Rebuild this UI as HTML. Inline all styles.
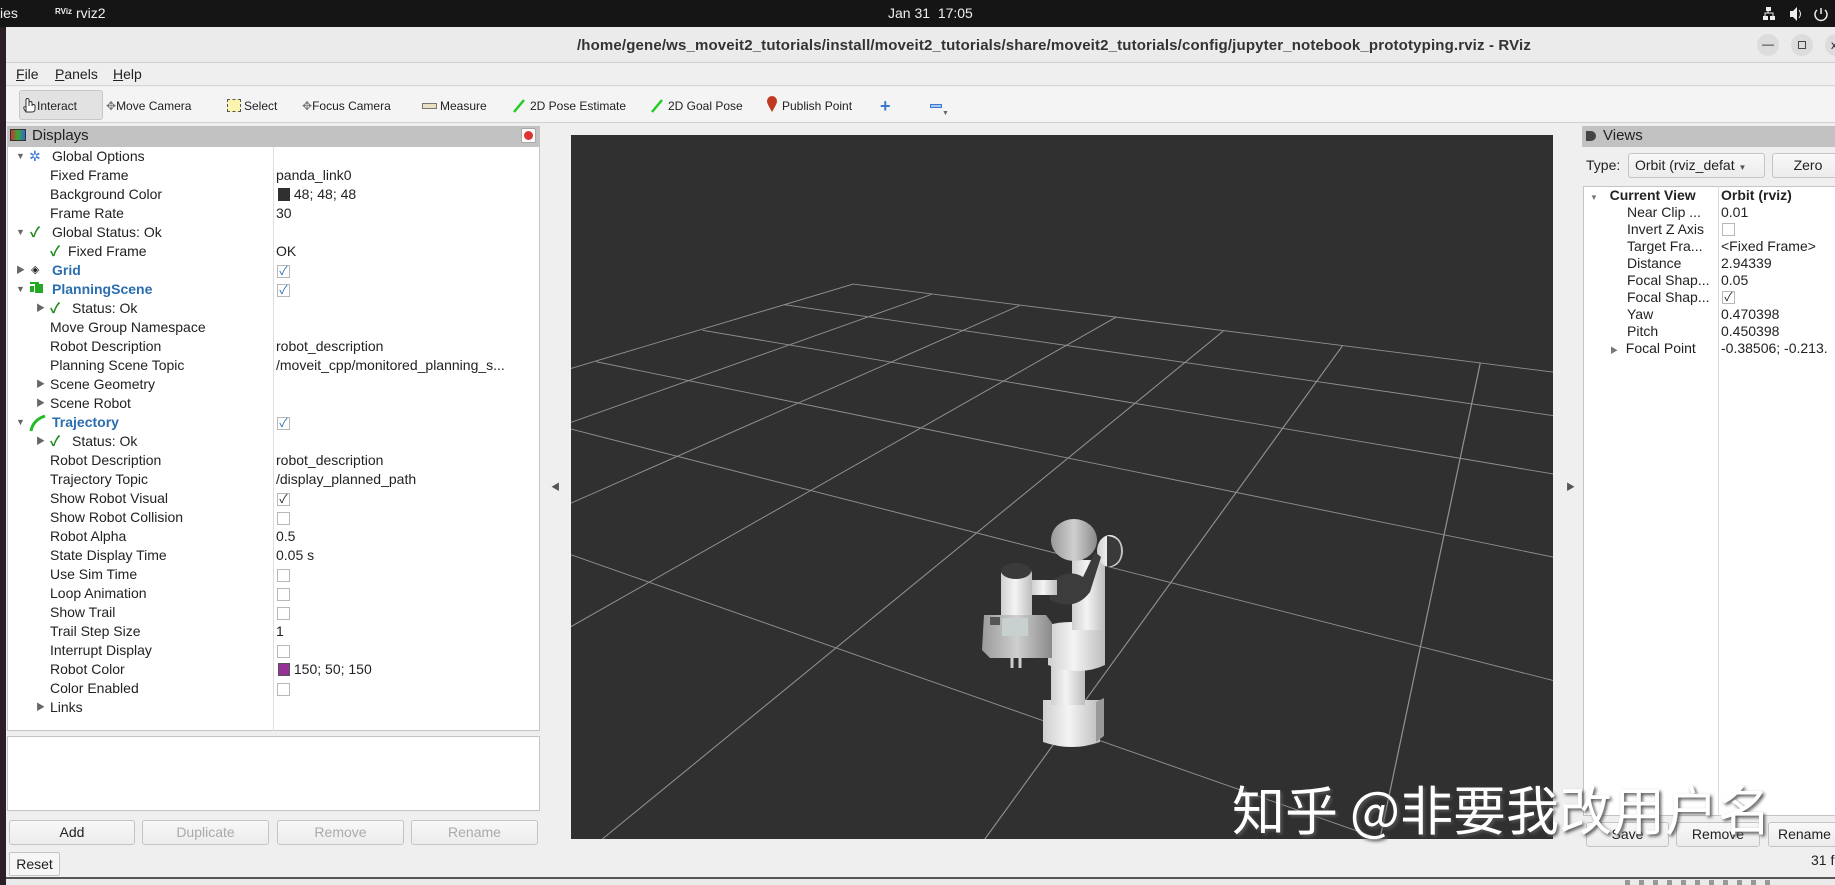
<!DOCTYPE html>
<html><head><meta charset="utf-8">
<style>
*{margin:0;padding:0;box-sizing:border-box}
body{width:1835px;height:885px;overflow:hidden;background:#efefef;font-family:"Liberation Sans","Noto Sans CJK SC",sans-serif;color:#222;position:relative}
.a{position:absolute}
.r{position:absolute;height:19px;line-height:19px;font-size:14px;white-space:nowrap}
.rr{position:absolute;height:17px;line-height:17px;font-size:14px;white-space:nowrap}
.cb{position:absolute;width:13px;height:13px;border:1px solid #b8b8b8;background:#fff;font-size:12px;line-height:11px;text-align:center;color:#222}
.blue{color:#2a6db0;font-weight:bold}
.tri{position:absolute;font-size:9px;color:#666}
.btn{position:absolute;border:1px solid #c4c4c4;border-radius:3px;background:linear-gradient(#f8f8f8,#ececec);font-size:14px;text-align:center}
.tb{position:absolute;top:98px;font-size:12px;height:16px;line-height:16px;white-space:nowrap}
.chk{color:#1a8a1a;font-weight:bold}
</style></head><body>
<div class="a" style="left:0;top:0;width:1835px;height:27px;background:#151515;color:#eee;font-size:14px">
 <span class="a" style="left:0;top:5px">ies</span>
 <span class="a" style="left:55px;top:7px;font-size:8px;font-weight:bold">RViz</span>
 <span class="a" style="left:76px;top:5px">rviz2</span>
 <span class="a" style="left:888px;top:5px">Jan 31&nbsp; 17:05</span>
 <svg class="a" style="left:1763px;top:5px" width="70" height="18"><g fill="#eee"><rect x="3" y="2" width="5" height="4"/><rect x="0" y="11" width="5" height="4"/><rect x="7" y="11" width="5" height="4"/><path d="M5 6v2M2 11V8h8v3" stroke="#eee" fill="none"/><path d="M27 6h3l4-4v14l-4-4h-3z"/><path d="M36 5q3 4 0 8" stroke="#eee" fill="none"/><path d="M58 3v6M54 5a6 6 0 1 0 8 0" stroke="#eee" stroke-width="1.5" fill="none"/></g></svg>
</div>
<div class="a" style="left:0;top:27px;width:6px;height:858px;background:#2b1e27"></div>
<div class="a" style="left:6px;top:27px;width:1829px;height:36px;background:#ebebeb;border-bottom:1px solid #cfcfcf"></div>
<div class="a" style="left:440px;top:37px;width:1228px;text-align:center;font-size:15px;font-weight:bold;color:#333;letter-spacing:0.15px">/home/gene/ws_moveit2_tutorials/install/moveit2_tutorials/share/moveit2_tutorials/config/jupyter_notebook_prototyping.rviz - RViz</div>
<div class="a" style="left:1757px;top:34px;width:22px;height:22px;border-radius:11px;background:#dcdcdc;text-align:center;font-size:12px;line-height:20px">—</div>
<div class="a" style="left:1791px;top:34px;width:22px;height:22px;border-radius:11px;background:#dcdcdc"><div class="a" style="left:7px;top:7px;width:8px;height:8px;border:1px solid #444"></div></div>
<div class="a" style="left:1825px;top:34px;width:22px;height:22px;border-radius:11px;background:#dcdcdc;font-size:12px;line-height:22px;padding-left:6px">x</div>
<div class="a" style="left:6px;top:64px;width:1829px;height:22px;background:#efefef;border-bottom:1px solid #d6d6d6"></div>
<div class="a" style="left:16px;top:66px;font-size:14px"><u>F</u>ile</div>
<div class="a" style="left:55px;top:66px;font-size:14px"><u>P</u>anels</div>
<div class="a" style="left:113px;top:66px;font-size:14px"><u>H</u>elp</div>
<div class="a" style="left:6px;top:87px;width:1829px;height:36px;background:#f4f4f4;border-bottom:1px solid #d0d0d0"></div>
<div class="a" style="left:19px;top:90px;width:84px;height:30px;background:#e2e2e2;border:1px solid #c8c8c8;border-radius:3px"></div>
<svg class="a" style="left:22px;top:97px" width="14" height="17"><path d="M4 15V3a1.5 1.5 0 0 1 3 0v6V6a1.5 1.5 0 0 1 3 0v3a1.5 1.5 0 0 1 3 0v3q0 3-3 3z M4 10Q1 9 2 12l2 3" stroke="#333" fill="#fff"/></svg>
<div class="tb" style="left:37px">Interact</div>
<div class="tb" style="left:106px;color:#777">✥<span style="color:#222">Move Camera</span></div>
<div class="a" style="left:227px;top:99px;width:14px;height:13px;border:1px dashed #555;background:#fbf3b0"></div>
<div class="tb" style="left:244px">Select</div>
<div class="tb" style="left:302px;color:#777">✥<span style="color:#222">Focus Camera</span></div>
<div class="a" style="left:422px;top:103px;width:15px;height:6px;border:1px solid #777;background:#e8e0c0"></div>
<div class="tb" style="left:440px">Measure</div>
<svg class="a" style="left:512px;top:98px" width="14" height="16"><path d="M2 14L12 2" stroke="#2c2" stroke-width="2.5"/></svg><div class="tb" style="left:530px">2D Pose Estimate</div>
<svg class="a" style="left:650px;top:98px" width="14" height="16"><path d="M2 14L12 2" stroke="#2c2" stroke-width="2.5"/></svg><div class="tb" style="left:668px">2D Goal Pose</div>
<svg class="a" style="left:766px;top:96px" width="12" height="17"><path d="M6 16C2 9 1 7 1 5a5 5 0 0 1 10 0c0 2-1 4-5 11z" fill="#c03a22"/></svg>
<div class="tb" style="left:782px">Publish Point</div>
<div class="tb" style="left:880px;color:#3b7ad0;font-size:18px;font-weight:bold">+</div>
<div class="a" style="left:930px;top:104px;width:12px;height:4px;border:1px solid #3b7ad0;background:#a9c8ef"></div>
<div class="a" style="left:942px;top:110px;font-size:7px;color:#666">▼</div>

<div class="a" style="left:7px;top:126px;width:533px;height:21px;background:#c2c2c2"></div>
<div class="a" style="left:10px;top:129px;width:16px;height:12px;background:linear-gradient(90deg,#c33,#3a3,#36c);border:1px solid #333"></div>
<div class="a" style="left:32px;top:127px;font-size:15px">Displays</div>
<div class="a" style="left:521px;top:128px;width:15px;height:15px;background:#fff;border:1px solid #aaa;border-radius:2px"><div class="a" style="left:2px;top:2px;width:9px;height:9px;border-radius:5px;background:#d33"></div></div>
<div class="a" style="left:7px;top:147px;width:533px;height:584px;background:#fff;border:1px solid #c4c4c4;border-top:none"></div>
<div class="a" style="left:273px;top:147px;width:1px;height:584px;background:#dedede"></div>
<div class="a" style="left:7px;top:147px;width:533px;height:584px">
<div class="r" style="top:0"><span class="tri" style="left:9px">▼</span><span class="a" style="left:22px;color:#3a7ad0">✲</span><span class="a" style="left:45px">Global Options</span></div>
<div class="r" style="top:19px;left:43px">Fixed Frame</div><div class="r" style="top:19px;left:269px">panda_link0</div>
<div class="r" style="top:38px;left:43px">Background Color</div><div class="r" style="top:38px;left:271px"><span style="display:inline-block;width:12px;height:13px;background:#303030;vertical-align:-2px"></span> 48; 48; 48</div>
<div class="r" style="top:57px;left:43px">Frame Rate</div><div class="r" style="top:57px;left:269px">30</div>
<div class="r" style="top:76px"><span class="tri" style="left:9px">▼</span><span class="a chk" style="left:23px">✓</span><span class="a" style="left:45px">Global Status: Ok</span></div>
<div class="r" style="top:95px;left:43px"><span class="chk">✓</span> <span style="margin-left:4px">Fixed Frame</span></div><div class="r" style="top:95px;left:269px">OK</div>
<div class="r" style="top:114px"><span class="tri" style="left:9px">▶</span><span class="a" style="left:24px;font-size:11px">◈</span><span class="a blue" style="left:45px">Grid</span></div>
<div class="r" style="top:133px"><span class="tri" style="left:9px">▼</span><span class="a" style="left:23px;top:6px;width:4px;height:6px;background:#2a2"></span><span class="a" style="left:28px;top:4px;width:8px;height:9px;background:#2a2"></span><span class="a" style="left:23px;top:2px;width:9px;height:2px;background:#2a2"></span><span class="a blue" style="left:45px">PlanningScene</span></div>
<div class="r" style="top:152px"><span class="tri" style="left:29px">▶</span><span class="a chk" style="left:43px">✓</span><span class="a" style="left:65px">Status: Ok</span></div>
<div class="r" style="top:171px;left:43px">Move Group Namespace</div>
<div class="r" style="top:190px;left:43px">Robot Description</div><div class="r" style="top:190px;left:269px">robot_description</div>
<div class="r" style="top:209px;left:43px">Planning Scene Topic</div><div class="r" style="top:209px;left:269px">/moveit_cpp/monitored_planning_s...</div>
<div class="r" style="top:228px"><span class="tri" style="left:29px">▶</span><span class="a" style="left:43px">Scene Geometry</span></div>
<div class="r" style="top:247px"><span class="tri" style="left:29px">▶</span><span class="a" style="left:43px">Scene Robot</span></div>
<div class="r" style="top:266px"><span class="tri" style="left:9px">▼</span><svg class="a" style="left:22px;top:1px" width="18" height="18"><path d="M2 17Q4 6 16 2" stroke="#2b2" stroke-width="3" fill="none"/></svg><span class="a blue" style="left:45px">Trajectory</span></div>
<div class="r" style="top:285px"><span class="tri" style="left:29px">▶</span><span class="a chk" style="left:43px">✓</span><span class="a" style="left:65px">Status: Ok</span></div>
<div class="r" style="top:304px;left:43px">Robot Description</div><div class="r" style="top:304px;left:269px">robot_description</div>
<div class="r" style="top:323px;left:43px">Trajectory Topic</div><div class="r" style="top:323px;left:269px">/display_planned_path</div>
<div class="r" style="top:342px;left:43px">Show Robot Visual</div>
<div class="r" style="top:361px;left:43px">Show Robot Collision</div>
<div class="r" style="top:380px;left:43px">Robot Alpha</div><div class="r" style="top:380px;left:269px">0.5</div>
<div class="r" style="top:399px;left:43px">State Display Time</div><div class="r" style="top:399px;left:269px">0.05 s</div>
<div class="r" style="top:418px;left:43px">Use Sim Time</div>
<div class="r" style="top:437px;left:43px">Loop Animation</div>
<div class="r" style="top:456px;left:43px">Show Trail</div>
<div class="r" style="top:475px;left:43px">Trail Step Size</div><div class="r" style="top:475px;left:269px">1</div>
<div class="r" style="top:494px;left:43px">Interrupt Display</div>
<div class="r" style="top:513px;left:43px">Robot Color</div><div class="r" style="top:513px;left:271px"><span style="display:inline-block;width:12px;height:13px;background:#963296;border:1px solid #555;vertical-align:-2px"></span> 150; 50; 150</div>
<div class="r" style="top:532px;left:43px">Color Enabled</div>
<div class="r" style="top:551px"><span class="tri" style="left:29px">▶</span><span class="a" style="left:43px">Links</span></div>
<div class="cb" style="left:270px;top:118px;color:#2a6db0">✓</div>
<div class="cb" style="left:270px;top:137px;color:#2a6db0">✓</div>
<div class="cb" style="left:270px;top:270px;color:#2a6db0">✓</div>
<div class="cb" style="left:270px;top:346px">✓</div>
<div class="cb" style="left:270px;top:365px"></div>
<div class="cb" style="left:270px;top:422px"></div>
<div class="cb" style="left:270px;top:441px"></div>
<div class="cb" style="left:270px;top:460px"></div>
<div class="cb" style="left:270px;top:498px"></div>
<div class="cb" style="left:270px;top:536px"></div>
</div>
<div class="a" style="left:7px;top:736px;width:533px;height:75px;background:#fff;border:1px solid #c4c4c4"></div>
<div class="btn" style="left:9px;top:820px;width:126px;height:25px;line-height:23px">Add</div>
<div class="btn" style="left:142px;top:820px;width:127px;height:25px;line-height:23px;color:#aaa">Duplicate</div>
<div class="btn" style="left:277px;top:820px;width:127px;height:25px;line-height:23px;color:#aaa">Remove</div>
<div class="btn" style="left:411px;top:820px;width:127px;height:25px;line-height:23px;color:#aaa">Rename</div>
<div class="btn" style="left:9px;top:852px;width:51px;height:24px;line-height:22px;border-radius:2px;background:#f6f6f6">Reset</div>

<div class="a" style="left:551px;top:480px;font-size:9px;color:#555">◀</div>
<div class="a" style="left:1566px;top:480px;font-size:9px;color:#555">▶</div>

<div class="a" style="left:571px;top:135px;width:982px;height:704px;background:#303030;overflow:hidden">
<svg class="a" style="left:0;top:0" width="982" height="704" viewBox="0 0 1566 1568" preserveAspectRatio="none">
<g stroke="#a8a8a8" stroke-width="2" fill="none" opacity="0.8">
<path d="M450 332L1566 528"/><path d="M340 378L1566 625"/><path d="M210 435L1566 755"/><path d="M40 505L1566 940"/><path d="M0 655L1566 1215"/><path d="M0 935L1290 1568"/>
<path d="M450 332L0 520"/><path d="M575 355L0 640"/><path d="M715 380L0 820"/><path d="M870 405L0 1095"/><path d="M1040 437L50 1568"/><path d="M1230 470L660 1568"/><path d="M1450 508L1290 1568"/>
</g></svg>
<svg class="a" style="left:0;top:0" width="982" height="704">
<defs>
<linearGradient id="w" x1="0" x2="1"><stop offset="0" stop-color="#cfcfcf"/><stop offset=".45" stop-color="#f4f4f4"/><stop offset="1" stop-color="#bdbdbd"/></linearGradient>
<linearGradient id="g" x1="0" x2="1"><stop offset="0" stop-color="#9a9a9a"/><stop offset=".5" stop-color="#cfcfcf"/><stop offset="1" stop-color="#8a8a8a"/></linearGradient>
</defs>
<g transform="translate(-571,-135)">
<path d="M1043 700h57v42q-28 10-57 0z" fill="url(#w)"/>
<path d="M1096 702l8-4v38l-8 6z" fill="#999"/>
<rect x="1051" y="650" width="34" height="55" fill="url(#w)"/>
<path d="M1048 625q30-8 57 5v35q-25 12-57 0z" fill="url(#w)"/>
<path d="M1072 560h33v70h-33z" fill="url(#w)"/>
<ellipse cx="1074" cy="540" rx="23" ry="21" fill="url(#g)"/>
<ellipse cx="1110" cy="551" rx="13" ry="16" fill="url(#w)"/>
<path d="M1107 536q14 1 14 15t-14 16z" fill="#3a3a3a"/>
<path d="M1048 585q18-18 35-8l12-25 6 5-11 35q-15 20-40 8z" fill="#3c3c3c"/>
<rect x="1001" y="568" width="31" height="65" rx="6" fill="url(#w)"/>
<ellipse cx="1016" cy="571" rx="15" ry="8" fill="#3a3a3a"/>
<path d="M1032 580h25v15h-25z" fill="url(#w)"/>
<path d="M984 615h62l6 8v35h-62l-8-8z" fill="url(#g)"/>
<rect x="1002" y="618" width="26" height="18" fill="#c8d0d0"/>
<rect x="990" y="617" width="10" height="8" fill="#555"/>
<path d="M1012 658v10M1020 658v10" stroke="#ccc" stroke-width="3"/>
</g></svg>
</div>

<div class="a" style="left:1582px;top:126px;width:253px;height:21px;background:#c2c2c2"></div>
<div class="a" style="left:1586px;top:131px;width:10px;height:10px;background:#444;border-radius:0 5px 5px 0"></div>
<div class="a" style="left:1603px;top:127px;font-size:15px">Views</div>
<div class="a" style="left:1586px;top:157px;font-size:14px">Type:</div>
<div class="btn" style="left:1628px;top:153px;width:137px;height:25px;line-height:23px;text-align:left;padding-left:6px">Orbit (rviz_defat <span style="font-size:8px;color:#555">▼</span></div>
<div class="btn" style="left:1772px;top:153px;width:80px;height:25px;line-height:23px;padding-right:8px">Zero</div>
<div class="a" style="left:1583px;top:186px;width:260px;height:630px;background:#fff;border:1px solid #c4c4c4"></div>
<div class="a" style="left:1718px;top:186px;width:1px;height:630px;background:#dcdcdc"></div>
<div class="rr" style="top:187px;left:1590px"><span style="font-size:8px;color:#777">▼</span>&nbsp;&nbsp; <b>Current View</b></div><div class="rr" style="top:187px;left:1721px"><b>Orbit (rviz)</b></div>
<div class="rr" style="top:204px;left:1627px">Near Clip ...</div><div class="rr" style="top:204px;left:1721px">0.01</div>
<div class="rr" style="top:221px;left:1627px">Invert Z Axis</div><div class="cb" style="left:1722px;top:223px"></div>
<div class="rr" style="top:238px;left:1627px">Target Fra...</div><div class="rr" style="top:238px;left:1721px">&lt;Fixed Frame&gt;</div>
<div class="rr" style="top:255px;left:1627px">Distance</div><div class="rr" style="top:255px;left:1721px">2.94339</div>
<div class="rr" style="top:272px;left:1627px">Focal Shap...</div><div class="rr" style="top:272px;left:1721px">0.05</div>
<div class="rr" style="top:289px;left:1627px">Focal Shap...</div><div class="cb" style="left:1722px;top:291px">✓</div>
<div class="rr" style="top:306px;left:1627px">Yaw</div><div class="rr" style="top:306px;left:1721px">0.470398</div>
<div class="rr" style="top:323px;left:1627px">Pitch</div><div class="rr" style="top:323px;left:1721px">0.450398</div>
<div class="rr" style="top:340px;left:1610px"><span style="font-size:8px;color:#777">▶</span>&nbsp; Focal Point</div><div class="rr" style="top:340px;left:1721px">-0.38506; -0.213.</div>
<div class="btn" style="left:1586px;top:822px;width:83px;height:25px;line-height:23px">Save</div>
<div class="btn" style="left:1676px;top:822px;width:84px;height:25px;line-height:23px">Remove</div>
<div class="btn" style="left:1768px;top:822px;width:90px;height:25px;line-height:23px;text-align:left;padding-left:9px">Rename</div>
<div class="a" style="left:1811px;top:852px;font-size:14px">31 f</div>

<div class="a" style="left:1232px;top:776px;font-size:53px;color:#fff;font-family:'Noto Sans CJK SC','WenQuanYi Zen Hei',sans-serif;text-shadow:2px 2px 3px #555;white-space:nowrap;line-height:64px">知乎 @非要我改用户名</div>

<div class="a" style="left:6px;top:877px;width:1829px;height:2px;background:#555"></div>
<div class="a" style="left:6px;top:879px;width:1829px;height:6px;background:#eaeaea"></div>
<div class="a" style="left:1625px;top:880px;width:150px;height:5px;background:repeating-linear-gradient(90deg,#999 0 5px,transparent 5px 14px)"></div>
</body></html>
